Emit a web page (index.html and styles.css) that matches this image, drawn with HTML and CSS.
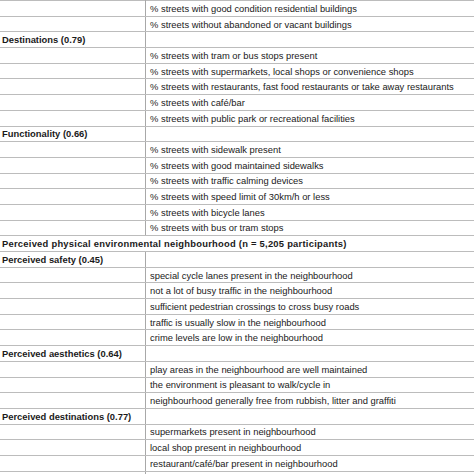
FILE: index.html
```html
<!DOCTYPE html>
<html>
<head>
<meta charset="utf-8">
<link rel="stylesheet" href="styles.css">
</head>
<body>
<table class="t">
<tr><td class="l"></td><td>% streets with good condition residential buildings</td></tr>
<tr><td class="l"></td><td>% streets without abandoned or vacant buildings</td></tr>
<tr class="h"><td class="l">Destinations (0.79)</td><td></td></tr>
<tr><td class="l"></td><td>% streets with tram or bus stops present</td></tr>
<tr><td class="l"></td><td>% streets with supermarkets, local shops or convenience shops</td></tr>
<tr><td class="l"></td><td>% streets with restaurants, fast food restaurants or take away restaurants</td></tr>
<tr><td class="l"></td><td>% streets with café/bar</td></tr>
<tr><td class="l"></td><td>% streets with public park or recreational facilities</td></tr>
<tr class="h"><td class="l">Functionality (0.66)</td><td></td></tr>
<tr><td class="l"></td><td>% streets with sidewalk present</td></tr>
<tr><td class="l"></td><td>% streets with good maintained sidewalks</td></tr>
<tr><td class="l"></td><td>% streets with traffic calming devices</td></tr>
<tr><td class="l"></td><td>% streets with speed limit of 30km/h or less</td></tr>
<tr><td class="l"></td><td>% streets with bicycle lanes</td></tr>
<tr><td class="l"></td><td>% streets with bus or tram stops</td></tr>
<tr class="h"><td class="span" colspan="2">Perceived physical environmental neighbourhood (n = 5,205 participants)</td></tr>
<tr class="h"><td class="l">Perceived safety (0.45)</td><td></td></tr>
<tr><td class="l"></td><td>special cycle lanes present in the neighbourhood</td></tr>
<tr><td class="l"></td><td>not a lot of busy traffic in the neighbourhood</td></tr>
<tr><td class="l"></td><td>sufficient pedestrian crossings to cross busy roads</td></tr>
<tr><td class="l"></td><td>traffic is usually slow in the neighbourhood</td></tr>
<tr><td class="l"></td><td>crime levels are low in the neighbourhood</td></tr>
<tr class="h"><td class="l">Perceived aesthetics (0.64)</td><td></td></tr>
<tr><td class="l"></td><td>play areas in the neighbourhood are well maintained</td></tr>
<tr><td class="l"></td><td>the environment is pleasant to walk/cycle in</td></tr>
<tr><td class="l"></td><td>neighbourhood generally free from rubbish, litter and graffiti</td></tr>
<tr class="h"><td class="l">Perceived destinations (0.77)</td><td></td></tr>
<tr><td class="l"></td><td>supermarkets present in neighbourhood</td></tr>
<tr><td class="l"></td><td>local shop present in neighbourhood</td></tr>
<tr><td class="l"></td><td>restaurant/café/bar present in neighbourhood</td></tr>
<tr><td class="l"></td><td></td></tr>
</table>
</body>
</html>
```
FILE: styles.css
```css
html, body { margin: 0; padding: 0; background: #fff; }
body { overflow: hidden; width: 474px; height: 474px; }
.t {
  border-collapse: collapse;
  width: 474px;
  font-family: "Liberation Sans", Arial, sans-serif;
  font-size: 9.4px;
  color: #1a1a1a;
  table-layout: fixed;
}
.t td {
  height: 13.7px;
  padding: 1px 0 0 4px;
  border-top: 1px solid #bcbcbc;
  border-bottom: 1px solid #bcbcbc;
  white-space: nowrap;
  vertical-align: middle;
  line-height: 10px;
}
.t td.l { width: 143px; padding-left: 2px; border-right: 1px solid #a8a8a8; }
.t td.span { padding-left: 2px; letter-spacing: 0.25px; }
.t tr.h td { font-weight: bold; }
```
